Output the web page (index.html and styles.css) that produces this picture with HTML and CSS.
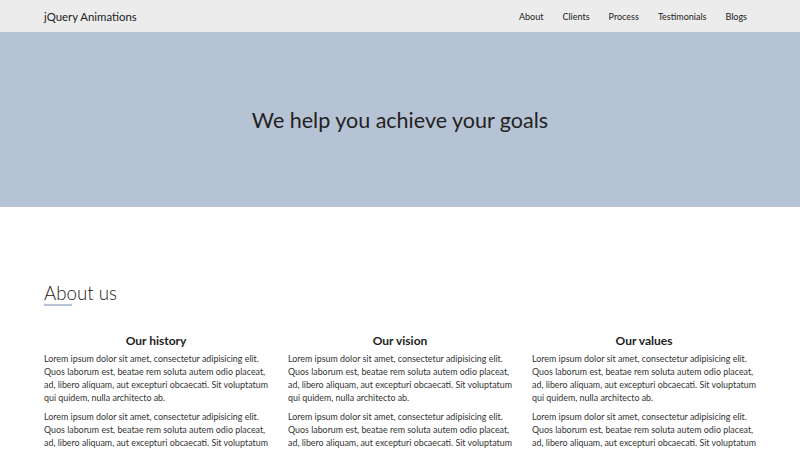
FILE: index.html
```html
<!DOCTYPE html>
<html lang="en">
<head>
<meta charset="utf-8">
<title>jQuery Animations</title>
<link rel="stylesheet" href="styles.css">
</head>
<body>
<header class="navbar">
  <div class="container nav-inner">
    <a class="brand" href="#">jQuery Animations</a>
    <nav class="nav-links">
      <a href="#">About</a>
      <a href="#">Clients</a>
      <a href="#">Process</a>
      <a href="#">Testimonials</a>
      <a href="#">Blogs</a>
    </nav>
  </div>
</header>
<section class="hero">
  <h1>We help you achieve your goals</h1>
</section>
<section class="about">
  <div class="container">
    <h2 class="section-title">About us</h2>
    <div class="cols">
      <div class="col">
        <h3>Our history</h3>
        <p>Lorem ipsum dolor sit amet, consectetur adipisicing elit. Quos laborum est, beatae rem soluta autem odio placeat, ad, libero aliquam, aut excepturi obcaecati. Sit voluptatum qui quidem, nulla architecto ab.</p>
        <p>Lorem ipsum dolor sit amet, consectetur adipisicing elit. Quos laborum est, beatae rem soluta autem odio placeat, ad, libero aliquam, aut excepturi obcaecati. Sit voluptatum qui quidem, nulla architecto ab.</p>
      </div>
      <div class="col">
        <h3>Our vision</h3>
        <p>Lorem ipsum dolor sit amet, consectetur adipisicing elit. Quos laborum est, beatae rem soluta autem odio placeat, ad, libero aliquam, aut excepturi obcaecati. Sit voluptatum qui quidem, nulla architecto ab.</p>
        <p>Lorem ipsum dolor sit amet, consectetur adipisicing elit. Quos laborum est, beatae rem soluta autem odio placeat, ad, libero aliquam, aut excepturi obcaecati. Sit voluptatum qui quidem, nulla architecto ab.</p>
      </div>
      <div class="col">
        <h3>Our values</h3>
        <p>Lorem ipsum dolor sit amet, consectetur adipisicing elit. Quos laborum est, beatae rem soluta autem odio placeat, ad, libero aliquam, aut excepturi obcaecati. Sit voluptatum qui quidem, nulla architecto ab.</p>
        <p>Lorem ipsum dolor sit amet, consectetur adipisicing elit. Quos laborum est, beatae rem soluta autem odio placeat, ad, libero aliquam, aut excepturi obcaecati. Sit voluptatum qui quidem, nulla architecto ab.</p>
      </div>
    </div>
  </div>
</section>
</body>
</html>
```
FILE: styles.css
```css
* { box-sizing: border-box; }
html, body { margin: 0; padding: 0; }
body {
  font-family: Lato, "Noto Sans", sans-serif;
  color: #333;
  background: #fff;
}
.container {
  width: 712px;
  margin: 0 auto;
}
.navbar {
  background: #ececec;
  height: 32px;
}
.nav-inner {
  display: flex;
  align-items: center;
  justify-content: space-between;
  height: 32px;
}
.brand {
  font-size: 11.4px;
  color: #222;
  text-decoration: none;
}
.nav-links {
  display: flex;
  gap: 19px;
  padding-right: 9px;
}
.nav-links a {
  font-size: 9px;
  color: #222;
  text-decoration: none;
}
.hero {
  background: #b6c3d4;
  height: 175px;
  display: flex;
  align-items: center;
  justify-content: center;
}
.hero h1 {
  margin: 0;
  font-size: 21.5px;
  font-weight: 400;
  color: #222;
}
.about {
  padding-top: 75px;
}
.section-title {
  margin: 0;
  font-size: 18.7px;
  font-weight: 300;
  color: #222;
  display: inline-block;
  line-height: 22px;
}
.section-title::after {
  content: "";
  display: block;
  width: 28px;
  height: 2px;
  background: #b6c3d4;
  margin-top: 0;
}
.cols {
  display: grid;
  grid-template-columns: repeat(3, 1fr);
  gap: 20px;
  margin-top: 27px;
}
.col h3 {
  margin: 0 0 3px;
  text-align: center;
  font-size: 12px;
  font-weight: 700;
  color: #222;
  line-height: 16px;
}
.col p {
  margin: 0 0 6px;
  font-size: 8.9px;
  line-height: 13px;
  color: #333;
}
```
